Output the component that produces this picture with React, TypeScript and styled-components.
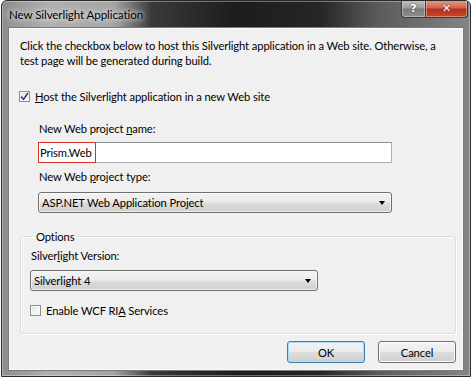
import React from "react";
import styled, { createGlobalStyle } from "styled-components";

const GlobalStyle = createGlobalStyle`
  html, body {
    margin: 0;
    padding: 0;
    background: #ffffff;
  }
  body {
    font-family: Lato, "Liberation Sans", sans-serif;
    letter-spacing: -0.1px;
  }
`;

const Window = styled.div`
  width: 470px;
  height: 377px;
  margin-left: 1px;
  display: flex;
  flex-direction: column;
  box-sizing: border-box;
  border: 1px solid #2a2a2a;
  border-radius: 6px 6px 0 0;
  background: linear-gradient(
    to right,
    #8c8c8c 0%,
    #b0b0b0 10%,
    #a4a4a4 24%,
    #3a3a3a 32%,
    #1c1c1c 50%,
    #262626 68%,
    #5a5a5a 80%,
    #858585 100%
  );
  box-shadow: inset 0 0 0 1px rgba(255, 255, 255, 0.35);
  overflow: hidden;
`;

const TitleBar = styled.div`
  height: 26px;
  display: flex;
  align-items: flex-start;
  justify-content: space-between;
  flex-shrink: 0;
`;

const Title = styled.span`
  margin: 6px 0 0 7px;
  padding: 0 8px 0 0;
  font-size: 11.6px;
  line-height: 15px;
  color: #000;
  text-shadow: 0 0 8px #e8e8e8, 0 0 4px #ececec;
  white-space: nowrap;
`;

const Captions = styled.div`
  display: flex;
  margin-right: 2px;
  margin-top: -1px;
`;

const CaptionButton = styled.div<{ $close?: boolean }>`
  width: ${(p) => (p.$close ? 42 : 25)}px;
  height: 18px;
  box-sizing: border-box;
  display: flex;
  align-items: center;
  justify-content: center;
  border: 1px solid #3a3a3a;
  border-top: none;
  border-radius: ${(p) => (p.$close ? "0 0 4px 0" : "0 0 0 4px")};
  ${(p) => (p.$close ? "border-left: none;" : "")}
  background: ${(p) =>
    p.$close
      ? "linear-gradient(#e3a08e 0%, #d0654c 45%, #b8301a 55%, #c8492c 100%)"
      : "linear-gradient(#c4c4c4 0%, #9c9c9c 45%, #7c7c7c 55%, #8e8e8e 100%)"};
  box-shadow: inset 0 0 0 1px rgba(255, 255, 255, 0.35);
  color: #fff;
  font-family: "DejaVu Sans", sans-serif;
  font-weight: bold;
  font-size: 11px;
  text-shadow: 0 0 2px #333;
`;

const Client = styled.div`
  flex: 1;
  margin: 0 6px 5px 6px;
  background: #f0f0f0;
  border: 1px solid #7a7a7a;
  box-shadow: inset 0 0 0 1px #fbfbfb;
  display: flex;
  flex-direction: column;
  padding: 10px 7px 0 10px;
  font-size: 11.2px;
  line-height: 15px;
  color: #000;
`;

const Intro = styled.p`
  margin: 0 0 0 1px;
  white-space: nowrap;
`;

const CheckRow = styled.label<{ $top: number }>`
  display: flex;
  align-items: center;
  gap: 5px;
  margin-top: ${(p) => p.$top}px;
  height: 15px;
  white-space: nowrap;
`;

const Box = styled.span`
  width: 11px;
  height: 11px;
  box-sizing: border-box;
  border: 1px solid #8f8f8f;
  background: linear-gradient(135deg, #dcdcdc 0%, #f6f6f6 60%, #ffffff 100%);
  box-shadow: inset 0 0 0 1px #f4f4f4;
  display: flex;
  align-items: center;
  justify-content: center;
`;

const Indented = styled.div`
  display: flex;
  flex-direction: column;
  margin-left: 19px;
`;

const FieldLabel = styled.div<{ $top: number }>`
  margin-top: ${(p) => p.$top}px;
  padding-left: 1px;
  white-space: nowrap;
`;

const TextBox = styled.div`
  margin-top: 6px;
  width: 354px;
  height: 21px;
  box-sizing: border-box;
  background: #fff;
  border: 1px solid #abadb3;
  border-top-color: #8e8f8f;
  border-left: none;
  display: flex;
`;

const Highlight = styled.span`
  height: 21px;
  margin-top: -1px;
  box-sizing: border-box;
  border: 1.5px solid #d9302a;
  padding: 0 3px 0 1px;
  display: flex;
  align-items: center;
`;

const Select = styled.div<{ $top: number; $width: number }>`
  margin-top: ${(p) => p.$top}px;
  width: ${(p) => p.$width}px;
  height: 21px;
  box-sizing: border-box;
  border: 1px solid #707070;
  border-radius: 3px;
  background: linear-gradient(#f3f3f3 0%, #ebebeb 48%, #dddddd 52%, #cfcfcf 100%);
  box-shadow: inset 0 0 0 1px rgba(255, 255, 255, 0.6);
  display: flex;
  align-items: center;
  justify-content: space-between;
  padding: 0 6px 0 3px;
  white-space: nowrap;
`;

const Arrow = styled.span`
  width: 0;
  height: 0;
  border-left: 3.5px solid transparent;
  border-right: 3.5px solid transparent;
  border-top: 4px solid #000;
  margin-top: 1px;
`;

const Group = styled.fieldset`
  margin: 16px 0 0 1px;
  padding: 0 0 15px 9px;
  border: 1px solid #dcdcdc;
  box-shadow: 1px 1px 0 #ffffff, inset 1px 1px 0 #ffffff;
  border-radius: 3px;
  display: flex;
  flex-direction: column;
`;

const Legend = styled.legend`
  padding: 0 2px 0 3px;
  margin-left: 3px;
  line-height: 15px;
`;

const Footer = styled.div`
  display: flex;
  justify-content: flex-end;
  gap: 13px;
  margin-top: 7px;
`;

const Button = styled.div<{ $default?: boolean }>`
  width: 78px;
  height: 22px;
  box-sizing: border-box;
  border: 1px solid ${(p) => (p.$default ? "#3c7fb1" : "#707070")};
  border-radius: 3px;
  background: linear-gradient(#f3f3f3 0%, #ebebeb 48%, #dddddd 52%, #cfcfcf 100%);
  box-shadow: inset 0 0 0 1px ${(p) => (p.$default ? "#a9dcf5" : "#fcfcfc")};
  display: flex;
  align-items: center;
  justify-content: center;
`;

const Key = styled.span`
  text-decoration: underline;
`;

const Check = () => (
  <svg width="9" height="9" viewBox="0 0 9 9">
    <path d="M1 4.5 L3.5 7.2 L8 1" fill="none" stroke="#2b3f7a" strokeWidth="1.6" />
  </svg>
);

export default function App() {
  return (
    <>
      <GlobalStyle />
      <Window>
        <TitleBar>
          <Title>New Silverlight Application</Title>
          <Captions>
            <CaptionButton>?</CaptionButton>
            <CaptionButton $close>✕</CaptionButton>
          </Captions>
        </TitleBar>
        <Client>
          <Intro>
            Click the checkbox below to host this Silverlight application in a Web site. Otherwise, a
            <br />
            test page will be generated during build.
          </Intro>
          <CheckRow $top={21}>
            <Box>
              <Check />
            </Box>
            <span>
              <Key>H</Key>ost the Silverlight application in a new Web site
            </span>
          </CheckRow>
          <Indented>
            <FieldLabel $top={17}>
              New Web project <Key>n</Key>ame:
            </FieldLabel>
            <TextBox>
              <Highlight>Prism.Web</Highlight>
            </TextBox>
            <FieldLabel $top={6}>
              New Web <Key>p</Key>roject type:
            </FieldLabel>
            <Select $top={8} $width={354}>
              <span>ASP.NET Web Application Project</span>
              <Arrow />
            </Select>
          </Indented>
          <Group>
            <Legend>Options</Legend>
            <FieldLabel $top={4}>
              Silver<Key>l</Key>ight Version:
            </FieldLabel>
            <Select $top={7} $width={288}>
              <span>Silverlight 4</span>
              <Arrow />
            </Select>
            <CheckRow $top={12}>
              <Box />
              <span>
                Enable WCF RI<Key>A</Key> Services
              </span>
            </CheckRow>
          </Group>
          <Footer>
            <Button $default>OK</Button>
            <Button>Cancel</Button>
          </Footer>
        </Client>
      </Window>
    </>
  );
}
